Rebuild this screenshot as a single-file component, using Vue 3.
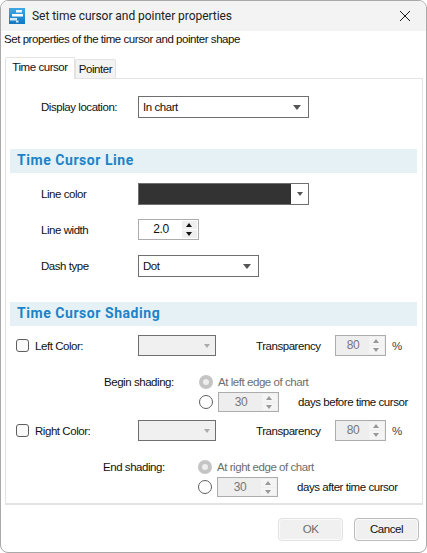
<script setup>
const shadings = [
  { color: 'Left Color:', shade: 'Begin shading:', edge: 'At left edge of chart', days: 'days before time cursor', cls: 'left' },
  { color: 'Right Color:', shade: 'End shading:', edge: 'At right edge of chart', days: 'days after time cursor', cls: 'right' }
]
</script>

<template>
  <div class="win">
    <header class="title">
      <svg class="logo" width="16" height="16" viewBox="0 0 16 16">
        <defs>
          <linearGradient id="lg" x1="0" y1="0" x2="0" y2="1">
            <stop offset="0" stop-color="#3fa9e6" />
            <stop offset="1" stop-color="#1277c4" />
          </linearGradient>
        </defs>
        <rect width="16" height="16" fill="url(#lg)" />
        <rect x="7" y="2" width="6" height="2.5" fill="#e8f5fd" />
        <rect x="3" y="6" width="11" height="2.5" fill="#ffffff" />
        <rect x="1" y="10" width="7" height="2.5" fill="#cfe9fa" />
        <rect x="7" y="12.5" width="2.5" height="2" fill="#cfe9fa" />
      </svg>
      <span class="title-text">Set time cursor and pointer properties</span>
      <svg class="close" width="12" height="12" viewBox="0 0 12 12">
        <path d="M1 1L11 11M11 1L1 11" stroke="#1a1a1a" stroke-width="1" fill="none" />
      </svg>
    </header>
    <div class="desc">Set properties of the time cursor and pointer shape</div>

    <div class="tabs">
      <div class="tab active">Time cursor</div>
      <div class="tab">Pointer</div>
    </div>

    <main class="panel">
      <div class="row display">
        <label class="lbl">Display location:</label>
        <div class="select s171">In chart<i class="arrow"></i></div>
      </div>

      <h2 class="head first">Time Cursor Line</h2>
      <div class="row r-color">
        <label class="lbl">Line color</label>
        <div class="select s171 swatch"><span class="fill"></span><span class="drop"><i class="arrow small"></i></span></div>
      </div>
      <div class="row r-width">
        <label class="lbl">Line width</label>
        <div class="spin s61">
          <span class="val">2.0</span>
          <span class="btns"><i class="up"></i><i class="down"></i></span>
        </div>
      </div>
      <div class="row r-dash">
        <label class="lbl">Dash type</label>
        <div class="select s121">Dot<i class="arrow"></i></div>
      </div>

      <h2 class="head second">Time Cursor Shading</h2>

      <section v-for="s in shadings" :key="s.cls" :class="['shade', s.cls]">
        <div class="color-row">
          <span class="check"></span>
          <label class="check-lbl">{{ s.color }}</label>
          <div class="select s78 off"><i class="arrow small dim"></i></div>
          <label class="trans">Transparency</label>
          <div class="spin s51 dis">
            <span class="val">80</span>
            <span class="btns"><i class="up"></i><i class="down"></i></span>
          </div>
          <span class="pct">%</span>
        </div>
        <div class="edge-row">
          <label class="shade-lbl">{{ s.shade }}</label>
          <span class="radio on"></span>
          <span class="edge-text">{{ s.edge }}</span>
        </div>
        <div class="days-row">
          <span class="radio"></span>
          <div class="spin s61 dis">
            <span class="val">30</span>
            <span class="btns"><i class="up"></i><i class="down"></i></span>
          </div>
          <span class="days">{{ s.days }}</span>
        </div>
      </section>
    </main>

    <footer class="foot">
      <div class="btn ok">OK</div>
      <div class="btn">Cancel</div>
    </footer>
  </div>
</template>

<style>
html, body { margin: 0; background: #fff; }
</style>

<style scoped>
.win {
  width: 427px; height: 553px; box-sizing: border-box;
  border: 1px solid #a9a9a9; border-radius: 8px; overflow: hidden;
  background: #fff; display: flex; flex-direction: column;
  font: 11.5px/16px "Liberation Sans", Arial, sans-serif; color: #111;
  letter-spacing: -0.45px;
}
.title {
  height: 30px; flex: none; background: #f3f3f3; display: flex; align-items: center;
  padding: 0 15px 0 8px;
}
.logo { flex: none; }
.title-text { margin-left: 7px; flex: 1; color: #222; font: 12px/16px Roboto, sans-serif; letter-spacing: -0.05px; }
.desc { height: 16px; padding-left: 3px; flex: none; line-height: 16px; }
.tabs { display: flex; height: 23px; margin: 8px 0 0 4px; align-items: flex-end; flex: none; }
.tab {
  box-sizing: border-box; height: 19px; width: 41px; border: 1px solid #e3e3e3; border-bottom: 0;
  background: #f3f3f3; text-align: center; line-height: 19px;
  border-radius: 2px 2px 0 0;
}
.tab.active {
  height: 22px; width: 70px; background: #fff; position: relative; top: 1px; z-index: 1; line-height: 18px;
}
.panel {
  flex: none; box-sizing: border-box; height: 427px; margin-left: 4px; width: 418px;
  border: 1px solid #e3e3e3; border-bottom-width: 2px; background: #fff; padding-top: 17px;
}
.row { display: flex; align-items: center; padding-left: 35px; }
.lbl { width: 97px; flex: none; }
.display { height: 22px; }
.r-color { height: 22px; margin-top: 10px; }
.r-width { height: 21px; margin-top: 14px; }
.r-dash { height: 22px; margin-top: 15px; }
.select {
  box-sizing: border-box; height: 22px; border: 1px solid #6f6f6f; background: #fff; position: relative;
  padding-left: 4px; line-height: 20px; flex: none;
}
.s171 { width: 171px; }
.s121 { width: 121px; }
.s78 { width: 78px; height: 21px; background: #f0f0f0; }
.arrow {
  position: absolute; right: 5px; top: 8px; width: 0; height: 0;
  border-left: 4px solid transparent; border-right: 4px solid transparent; border-top: 5px solid #555;
}
.s171 > .arrow { right: 7px; }
.s121 > .arrow { right: 7px; }
.arrow.small { right: 5px; border-left-width: 3px; border-right-width: 3px; border-top-width: 4px; }
.arrow.dim { border-top-color: #aaa; top: 8px; }
.swatch { padding: 0; display: flex; }
.fill { flex: 1; background: #333; }
.drop { width: 17px; position: relative; }
.spin {
  box-sizing: border-box; height: 21px; border: 1px solid #acacac; display: flex; flex: none; background: #fff;
  padding: 1px;
}
.s61 { width: 61px; }
.s51 { width: 51px; }
.val { flex: 1; text-align: center; line-height: 17px; font-size: 12px; }
.btns { width: 15px; display: flex; flex-direction: column; gap: 1px; }
.btns i { flex: 1; background: #efefef; position: relative; display: block; }
.btns i::after {
  content: ""; position: absolute; left: 4px; width: 0; height: 0;
  border-left: 3px solid transparent; border-right: 3px solid transparent;
}
.up::after { top: 2px; border-bottom: 4px solid #111; }
.down::after { top: 2px; border-top: 4px solid #111; }
.dis { background: #eee; }
.dis .val { color: #777; }
.dis .btns i { background: #f4f4f4; }
.dis .up::after { border-bottom-color: #999; }
.dis .down::after { border-top-color: #999; }
.head {
  margin: 0 5px 0 4px; height: 24px; background: #e6f1f6; color: #1c83c6; padding-left: 7px;
  font: 700 14px/23px Roboto, sans-serif; letter-spacing: 0.55px;
}
.head.first { margin-top: 31px; }
.head.second { margin-top: 25px; }
.shade.left { margin-top: 9px; }
.shade.right { margin-top: 8px; }
.color-row { display: flex; align-items: center; height: 21px; padding-left: 10px; }
.check {
  box-sizing: border-box; width: 13px; height: 13px; border: 1px solid #5e5e5e; border-radius: 3px; flex: none;
  background: #fafafa;
}
.check-lbl { margin-left: 6px; width: 103px; flex: none; }
.trans { margin-left: 40px; width: 79px; flex: none; }
.pct { margin-left: 6px; color: #444; }
.edge-row { display: flex; align-items: center; height: 16px; margin-top: 18px; padding-left: 98px; }
.right .edge-row { padding-left: 97px; }
.shade-lbl { width: 95px; flex: none; }
.radio {
  box-sizing: border-box; width: 14px; height: 14px; border: 1px solid #5e5e5e; border-radius: 50%; background: #fff; flex: none;
}
.radio.on { border: 4px solid #c4c4c4; background: #eee; }
.edge-text { margin-left: 5px; color: #6d6d6d; }
.days-row { display: flex; align-items: center; height: 20px; margin-top: 2px; padding-left: 193px; }
.right .days-row { padding-left: 192px; }
.days-row .spin { margin-left: 5px; height: 20px; }
.days-row .val { line-height: 16px; }
.days { margin-left: 19px; white-space: nowrap; }
.foot { flex: 1; display: flex; justify-content: flex-end; align-items: flex-start; gap: 11px; padding: 13px 7px 0 0; }
.btn {
  box-sizing: border-box; width: 65px; height: 23px; border: 1px solid #bcbcbc; border-radius: 4px;
  background: #f0f0f0; text-align: center; line-height: 21px; box-shadow: inset 0 0 0 1px #fafafa;
}
.btn.ok { color: #6d6d6d; border-color: #e2e2e2; }
</style>
